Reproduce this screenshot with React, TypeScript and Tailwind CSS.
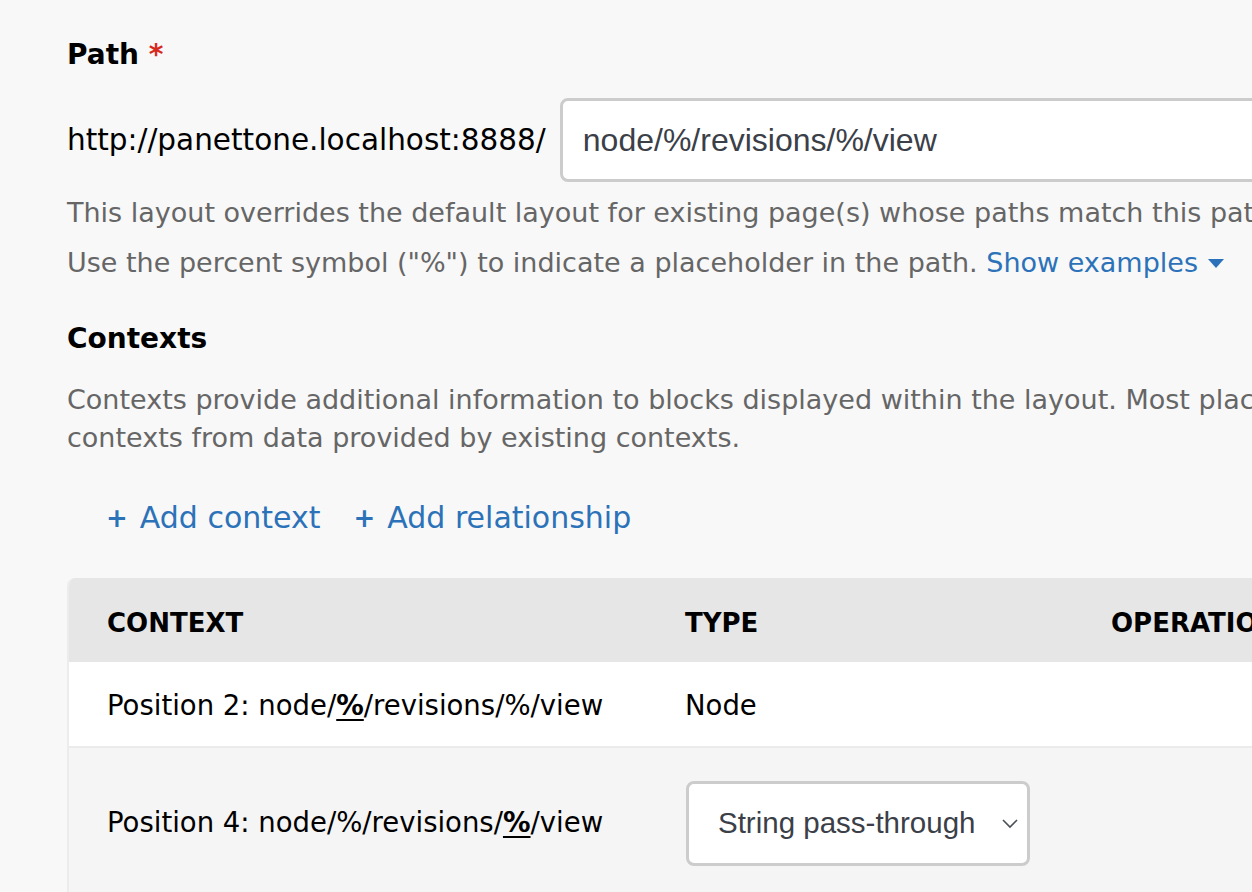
import React from "react";

const body = '"DejaVu Sans", "Open Sans", sans-serif';
const field = '"Liberation Sans", Arial, sans-serif';

function Pct() {
  return <strong className="font-bold underline underline-offset-4">%</strong>;
}

function Chevron() {
  return (
    <svg width="18" height="12" viewBox="0 0 18 12" className="shrink-0">
      <polyline points="2,3 9,10 16,3" fill="none" stroke="#4a4f57" strokeWidth="1.6" />
    </svg>
  );
}

export default function App() {
  return (
    <div
      className="h-[892px] w-[1252px] overflow-hidden bg-[#f8f8f8] pl-[67px] text-black"
      style={{ fontFamily: body }}
    >
      <div className="w-[1400px]">
        <h2 className="pt-[35px] text-[28px] font-bold leading-[39px]">
          Path <span className="text-[#d62a1e]">*</span>
        </h2>

        <div className="mt-[24px] flex items-center gap-[14px]">
          <span className="text-[29.5px]">http://panettone.localhost:8888/</span>
          <div
            className="flex h-[84px] w-[800px] items-center rounded-[8px] border-[3px] border-[#cccccc] bg-white px-[20px] text-[32px] text-[#3b4048]"
            style={{ fontFamily: field }}
          >
            node/%/revisions/%/view
          </div>
        </div>

        <div className="mt-[12px] text-[27px] leading-[38px] text-[#666666]">
          <p className="whitespace-nowrap">This layout overrides the default layout for existing page(s) whose paths match this path.</p>
          <p className="mt-[12px]">
            Use the percent symbol ("%") to indicate a placeholder in the path.{" "}
            <a className="inline-flex items-center gap-[10px] text-[#2c72b8]">
              Show examples
              <svg width="16" height="9" viewBox="0 0 16 9">
                <polygon points="0,0 16,0 8,9" fill="#2c72b8" />
              </svg>
            </a>
          </p>
        </div>

        <h2 className="mt-[38px] text-[28px] font-bold leading-[38px]">Contexts</h2>
        <p className="mt-[23px] whitespace-nowrap text-[27px] leading-[38px] text-[#666666]">
          Contexts provide additional information to blocks displayed within the layout. Most places
          <br />
          contexts from data provided by existing contexts.
        </p>

        <div className="mt-[42px] flex gap-[33px] pl-[39px] text-[30px] leading-[38px] text-[#2c72b8]">
          <a className="flex items-center gap-[12px]">
            <span className="text-[26px] font-bold">+</span>Add context
          </a>
          <a className="flex items-center gap-[12px]">
            <span className="text-[26px] font-bold">+</span>Add relationship
          </a>
        </div>

        <div className="mt-[41px] overflow-hidden rounded-tl-[8px] border-l-2 border-[#ececec]">
          <div className="grid h-[84px] grid-cols-[578px_426px_1fr] items-center bg-[#e6e6e6] pt-[6px] text-[26px] font-bold">
            <div className="pl-[38px]">CONTEXT</div>
            <div className="pl-[38px]">TYPE</div>
            <div className="pl-[38px]">OPERATIONS</div>
          </div>
          <div className="grid h-[86px] grid-cols-[578px_426px_1fr] items-center border-b-2 border-[#ebebeb] bg-white pt-[4px] text-[27.5px]">
            <div className="pl-[38px]">
              Position 2: node/<Pct />/revisions/%/view
            </div>
            <div className="pl-[38px]">Node</div>
            <div />
          </div>
          <div className="grid h-[150px] grid-cols-[578px_426px_1fr] items-center bg-[#f5f5f5] text-[27.5px]">
            <div className="pl-[38px]">
              Position 4: node/%/revisions/<Pct />/view
            </div>
            <div className="pl-[39px]">
              <div
                className="flex h-[85px] w-[344px] items-center justify-between rounded-[8px] border-[3px] border-[#cccccc] bg-white pl-[29px] pr-[8px] text-[29.5px] text-[#3b4048]"
                style={{ fontFamily: field }}
              >
                String pass-through
                <Chevron />
              </div>
            </div>
            <div />
          </div>
        </div>
      </div>
    </div>
  );
}
